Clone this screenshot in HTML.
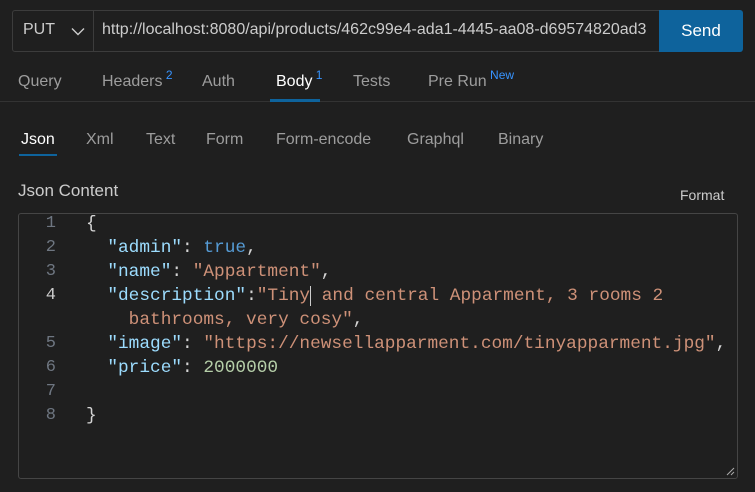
<!DOCTYPE html>
<html><head><meta charset="utf-8"><style>
*{margin:0;padding:0;box-sizing:border-box}
body{width:755px;height:492px;background:#1f1f1f;font-family:"Liberation Sans",sans-serif;color:#ccc;position:relative;overflow:hidden}
.a{position:absolute;white-space:nowrap}
.tab{font-size:16px;color:#9d9d9d}
sup{font-size:12px;color:#3794ff;position:relative;top:-7px;vertical-align:baseline}
.code{font-family:"Liberation Mono",monospace;font-size:17.8px;line-height:24px;white-space:pre}
.ln{position:absolute;left:20px;width:36px;text-align:right;color:#6e7681;font-family:"Liberation Mono",monospace;font-size:17px}
.k{color:#9cdcfe}.s{color:#ce9178}.b{color:#569cd6}.n{color:#b5cea8}.p{color:#d4d4d4}
</style></head><body>
<div class="a" style="left:12px;top:10px;width:82px;height:42px;border:1px solid #3c3c3c;border-radius:3px 0 0 3px;background:#1f1f1f"></div>
<div class="a" style="left:23px;top:21px;font-size:16px;color:#ccc">PUT</div>
<svg class="a" style="left:71px;top:27px" width="14" height="9" viewBox="0 0 14 9"><path d="M1 1.5L7 7.5L13 1.5" stroke="#ccc" stroke-width="1.4" fill="none"/></svg>
<div class="a" style="left:93px;top:10px;width:567px;height:42px;border:1px solid #3c3c3c;background:#1f1f1f"></div>
<div class="a" style="left:102px;top:21px;font-size:16px;color:#ccc;width:557px;overflow:hidden">http://localhost:8080/api/products/462c99e4-ada1-4445-aa08-d69574820ad3</div>
<div class="a" style="left:659px;top:10px;width:84px;height:42px;background:#0e639c;border-radius:0 3px 3px 0;color:#fff;font-size:17px;text-align:center;line-height:41px">Send</div>

<div class="a tab" style="left:18px;top:73px">Query</div>
<div class="a tab" style="left:102px;top:73px">Headers<sup> 2</sup></div>
<div class="a tab" style="left:202px;top:73px">Auth</div>
<div class="a tab" style="left:276px;top:73px;color:#fff">Body<sup> 1</sup></div>
<div class="a tab" style="left:353px;top:73px">Tests</div>
<div class="a tab" style="left:428px;top:73px">Pre Run<sup> New</sup></div>
<div class="a" style="left:0;top:101px;width:755px;height:1px;background:#333"></div>
<div class="a" style="left:270px;top:99px;width:50px;height:3px;background:#0e639c"></div>

<div class="a tab" style="left:21px;top:131px;color:#fff">Json</div>
<div class="a tab" style="left:86px;top:131px">Xml</div>
<div class="a tab" style="left:146px;top:131px">Text</div>
<div class="a tab" style="left:206px;top:131px">Form</div>
<div class="a tab" style="left:276px;top:131px">Form-encode</div>
<div class="a tab" style="left:407px;top:131px">Graphql</div>
<div class="a tab" style="left:498px;top:131px">Binary</div>
<div class="a" style="left:19px;top:154px;width:38px;height:2px;background:#0e639c"></div>

<div class="a" style="left:18px;top:181px;font-size:17px;color:#ccc">Json Content</div>
<div class="a" style="left:680px;top:187px;font-size:14px;color:#ccc">Format</div>

<div class="a" style="left:18px;top:213px;width:720px;height:266px;border:1px solid #454545;border-radius:3px"></div>
<svg class="a" style="left:725px;top:466px" width="10" height="10"><path d="M2 9L9 2M6 9L9 6" stroke="#aaa" stroke-width="1"/></svg>

<div class="ln" style="top:212px;line-height:24px">1<br>2<br>3<br><span style="color:#ccc">4</span><br>&nbsp;<br>5<br>6<br>7<br>8</div>
<div class="a code" style="left:86px;top:212px"><span class="p">{</span>
<span class="k">  "admin"</span><span class="p">: </span><span class="b">true</span><span class="p">,</span>
<span class="k">  "name"</span><span class="p">: </span><span class="s">"Appartment"</span><span class="p">,</span>
<span class="k">  "description"</span><span class="p">:</span><span class="s">"Tiny<span style="border-left:1px solid #ccc"></span> and central Apparment, 3 rooms 2</span>
<span class="s">    bathrooms, very cosy"</span><span class="p">,</span>
<span class="k">  "image"</span><span class="p">: </span><span class="s">"https://newsellapparment.com/tinyapparment.jpg"</span><span class="p">,</span>
<span class="k">  "price"</span><span class="p">: </span><span class="n">2000000</span>

<span class="p">}</span></div>
</body></html>
